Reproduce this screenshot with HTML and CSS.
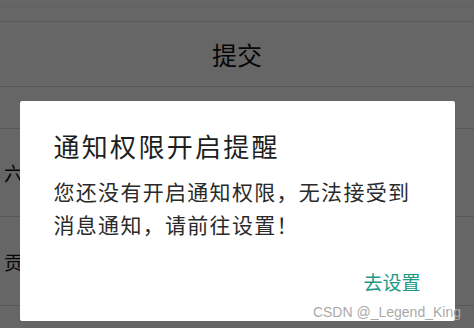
FILE: index.html
```html
<!DOCTYPE html>
<html lang="zh-CN">
<head>
<meta charset="utf-8">
<title>通知权限</title>
<link rel="stylesheet" href="styles.css">
</head>
<body>
<div class="page">
  <div class="status"></div>
  <div class="toolbar"></div>
  <div class="row submit-row">提交</div>
  <div class="row gap-row"></div>
  <div class="row item-row"><span class="item-label">六</span></div>
  <div class="row item-row"><span class="item-label">贡</span></div>
  <div class="row rest-row"></div>
</div>
<div class="overlay">
  <div class="dialog">
    <div class="dialog-title">通知权限开启提醒</div>
    <div class="dialog-body">您还没有开启通知权限，无法接受到<br>消息通知，请前往设置！</div>
    <div class="dialog-actions"><span class="dialog-btn">去设置</span></div>
  </div>
</div>
<div class="watermark">CSDN @_Legend_King</div>
</body>
</html>
```
FILE: styles.css
```css
html, body {
  margin: 0;
  padding: 0;
}
body {
  width: 474px;
  height: 328px;
  overflow: hidden;
  position: relative;
  background: #ffffff;
  font-family: "Noto Sans CJK SC", "Noto Sans", sans-serif;
}
.page {
  display: flex;
  flex-direction: column;
}
.status {
  height: 6px;
  border-bottom: 1px solid #f0f0f0;
}
.toolbar {
  height: 14px;
  border-bottom: 1px solid #e2e2e2;
}
.row {
  border-bottom: 1px solid #dcdcdc;
  display: flex;
  align-items: center;
}
.submit-row {
  height: 64px;
  justify-content: center;
  font-size: 25px;
  color: #111;
}
.gap-row {
  height: 41px;
}
.item-row {
  height: 87px;
  padding-left: 4px;
}
.item-row + .item-row {
  height: 88px;
}
.item-label {
  font-size: 19px;
  color: #111;
}
.rest-row {
  height: 30px;
  border-bottom: none;
}
.overlay {
  position: absolute;
  inset: 0;
  background: rgba(0, 0, 0, 0.6);
  display: flex;
  justify-content: center;
  align-items: flex-start;
  padding-top: 101px;
  box-sizing: border-box;
}
.dialog {
  width: 435px;
  height: 220px;
  box-sizing: border-box;
  background: #fff;
  border-radius: 2px;
  padding: 29px 34px 0 34px;
  display: flex;
  flex-direction: column;
}
.dialog-title {
  font-size: 26px;
  line-height: 32px;
  letter-spacing: 2.3px;
  color: #1e1e1e;
}
.dialog-body {
  margin-top: 13px;
  font-size: 21px;
  line-height: 33px;
  letter-spacing: 1.3px;
  color: #2a2a2a;
}
.dialog-actions {
  margin-top: 29px;
  display: flex;
  justify-content: flex-end;
}
.dialog-btn {
  font-size: 19px;
  line-height: 24px;
  color: #1c9a83;
}
.watermark {
  position: absolute;
  right: 13px;
  bottom: 8px;
  font-family: "Liberation Sans", Arial, sans-serif;
  font-size: 14px;
  color: #a9a9a9;
}
```
